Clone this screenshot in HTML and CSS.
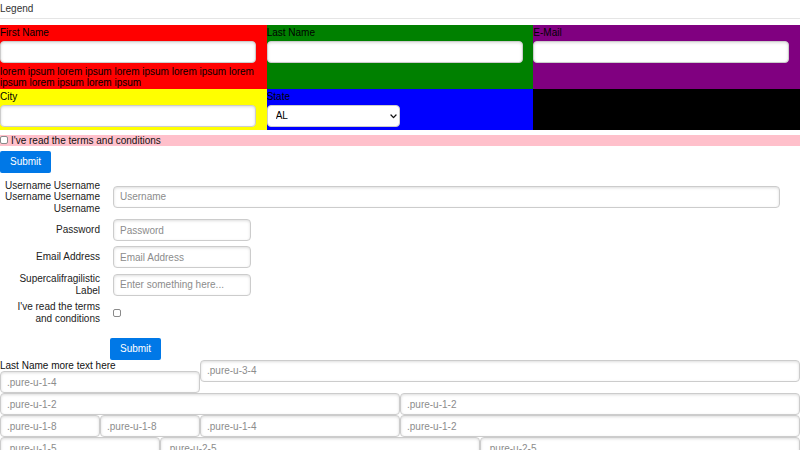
FILE: index.html
```html
<!DOCTYPE html>
<html lang="en">
<head>
<meta charset="utf-8">
<title>Pure forms</title>
<link rel="stylesheet" href="styles.css">
</head>
<body>
<form class="stacked">
  <div class="legend">Legend</div>
  <div class="grid3">
    <div class="cell red">
      <label class="lbl">First Name</label>
      <input class="field" type="text">
      <span class="msg">lorem ipsum lorem ipsum lorem ipsum lorem ipsum lorem ipsum lorem ipsum lorem ipsum</span>
    </div>
    <div class="cell green">
      <label class="lbl">Last Name</label>
      <input class="field" type="text">
    </div>
    <div class="cell purple">
      <label class="lbl">E-Mail</label>
      <input class="field" type="email">
    </div>
    <div class="cell yellow">
      <label class="lbl">City</label>
      <input class="field" type="text">
    </div>
    <div class="cell blue">
      <label class="lbl">State</label>
      <div class="select-wrap">
        <select class="state">
          <option>AL</option>
          <option>CA</option>
          <option>IL</option>
        </select>
        <svg class="chev" width="7" height="5" viewBox="0 0 7 5" aria-hidden="true"><path d="M1 1 L3.5 3.6 L6 1" fill="none" stroke="#111" stroke-width="1.3" stroke-linecap="round" stroke-linejoin="round"/></svg>
      </div>
    </div>
    <div class="cell black"></div>
  </div>
  <label class="terms"><input class="check" type="checkbox"> I've read the terms and conditions</label>
  <button class="btn" type="button">Submit</button>
</form>

<form class="aligned">
  <div class="group">
    <label class="alabel">Username Username Username Username Username</label>
    <input class="field wide" type="text" placeholder="Username">
  </div>
  <div class="group">
    <label class="alabel">Password</label>
    <input class="field short" type="password" placeholder="Password">
  </div>
  <div class="group">
    <label class="alabel">Email Address</label>
    <input class="field short" type="email" placeholder="Email Address">
  </div>
  <div class="group">
    <label class="alabel">Supercalifragilistic Label</label>
    <input class="field short" type="text" placeholder="Enter something here...">
  </div>
  <div class="group">
    <label class="alabel">I've read the terms and conditions</label>
    <input class="check" type="checkbox">
  </div>
  <div class="controls">
    <button class="btn" type="button">Submit</button>
  </div>
</form>

<div class="ugrid">
  <div class="u u-1-4">
    <label class="ulabel">Last Name more text here</label>
    <input class="field full" type="text" placeholder=".pure-u-1-4">
  </div>
  <div class="u u-3-4"><input class="field full" type="text" placeholder=".pure-u-3-4"></div>
  <div class="u u-1-2"><input class="field full" type="text" placeholder=".pure-u-1-2"></div>
  <div class="u u-1-2"><input class="field full" type="text" placeholder=".pure-u-1-2"></div>
  <div class="u u-1-8"><input class="field full" type="text" placeholder=".pure-u-1-8"></div>
  <div class="u u-1-8"><input class="field full" type="text" placeholder=".pure-u-1-8"></div>
  <div class="u u-1-4"><input class="field full" type="text" placeholder=".pure-u-1-4"></div>
  <div class="u u-1-2"><input class="field full" type="text" placeholder=".pure-u-1-2"></div>
  <div class="u u-1-5"><input class="field full" type="text" placeholder=".pure-u-1-5"></div>
  <div class="u u-2-5"><input class="field full" type="text" placeholder=".pure-u-2-5"></div>
  <div class="u u-2-5"><input class="field full" type="text" placeholder=".pure-u-2-5"></div>
</div>
</body>
</html>
```

FILE: styles.css
```css
html, body {
  margin: 0;
  padding: 0;
  background: #fff;
}
body {
  font-family: "Liberation Sans", Arial, Helvetica, sans-serif;
  font-size: 10px;
  line-height: 11.5px;
  color: #111;
  overflow: hidden;
}
form { margin: 0; }

.legend {
  color: #333;
  padding: 3px 0;
  border-bottom: 1px solid #e5e5e5;
  margin-bottom: 6px;
}

.field {
  box-sizing: border-box;
  height: 22px;
  padding: 0 6px;
  font: inherit;
  color: #222;
  background: #fff;
  border: 1px solid #ccc;
  border-radius: 4px;
  box-shadow: inset 0 1px 3px #ddd;
  outline: none;
}
.field::placeholder { color: #8c8c8c; }

/* stacked colored grid */
.grid3 {
  display: grid;
  grid-template-columns: 1fr 1fr 1fr;
}
.cell { display: block; }
.red { background: #ff0000; }
.green { background: #008000; }
.purple { background: #800080; }
.yellow { background: #ffff00; }
.blue { background: #0000ff; }
.black { background: #000; }

.lbl {
  display: block;
  margin: 2.5px 0;
  color: #000;
}
.cell .field {
  display: block;
  width: 96%;
  margin: 2.5px 0;
}
.msg { color: #000; }

.select-wrap {
  position: relative;
  width: 50%;
  margin: 2.5px 0;
}
.state {
  appearance: none;
  -webkit-appearance: none;
  display: block;
  box-sizing: border-box;
  width: 100%;
  height: 22px;
  margin: 0;
  padding: 0 8px;
  font: inherit;
  color: #000;
  background: #fff;
  border: 1px solid #ccc;
  border-radius: 4px;
  outline: none;
}
.chev {
  position: absolute;
  right: 3px;
  top: 9px;
  pointer-events: none;
}

.terms {
  display: flex;
  align-items: center;
  gap: 3px;
  margin: 5px 0;
  background: #ffc0cb;
  color: #111;
  height: 11.5px;
}

.check {
  appearance: none;
  -webkit-appearance: none;
  box-sizing: border-box;
  width: 8px;
  height: 8px;
  margin: 0;
  border: 1px solid #8a8a8a;
  border-radius: 2px;
  background: #fff;
  flex: none;
}

.btn {
  display: block;
  font: inherit;
  line-height: 11.5px;
  color: #fff;
  background: #0078e7;
  border: none;
  border-radius: 2px;
  padding: 5px 10px;
  cursor: pointer;
}

/* aligned form */
.aligned { padding-top: 7px; }
.group {
  display: flex;
  align-items: center;
  margin-bottom: 5px;
}
.alabel {
  width: 100px;
  flex: none;
  text-align: right;
  margin-right: 13px;
  color: #222;
}
.wide { width: 83.333%; }
.short { width: 138px; }
.controls { margin: 14px 0 0 110px; }

/* unit grid */
.ugrid {
  display: flex;
  flex-wrap: wrap;
  align-items: flex-start;
}
.u { box-sizing: border-box; }
.u-1-4 { width: 25%; }
.u-3-4 { width: 75%; }
.u-1-2 { width: 50%; }
.u-1-8 { width: 12.5%; }
.u-1-5 { width: 20%; }
.u-2-5 { width: 40%; }
.ulabel { display: block; color: #111; }
.full { display: block; width: 100%; }
```
